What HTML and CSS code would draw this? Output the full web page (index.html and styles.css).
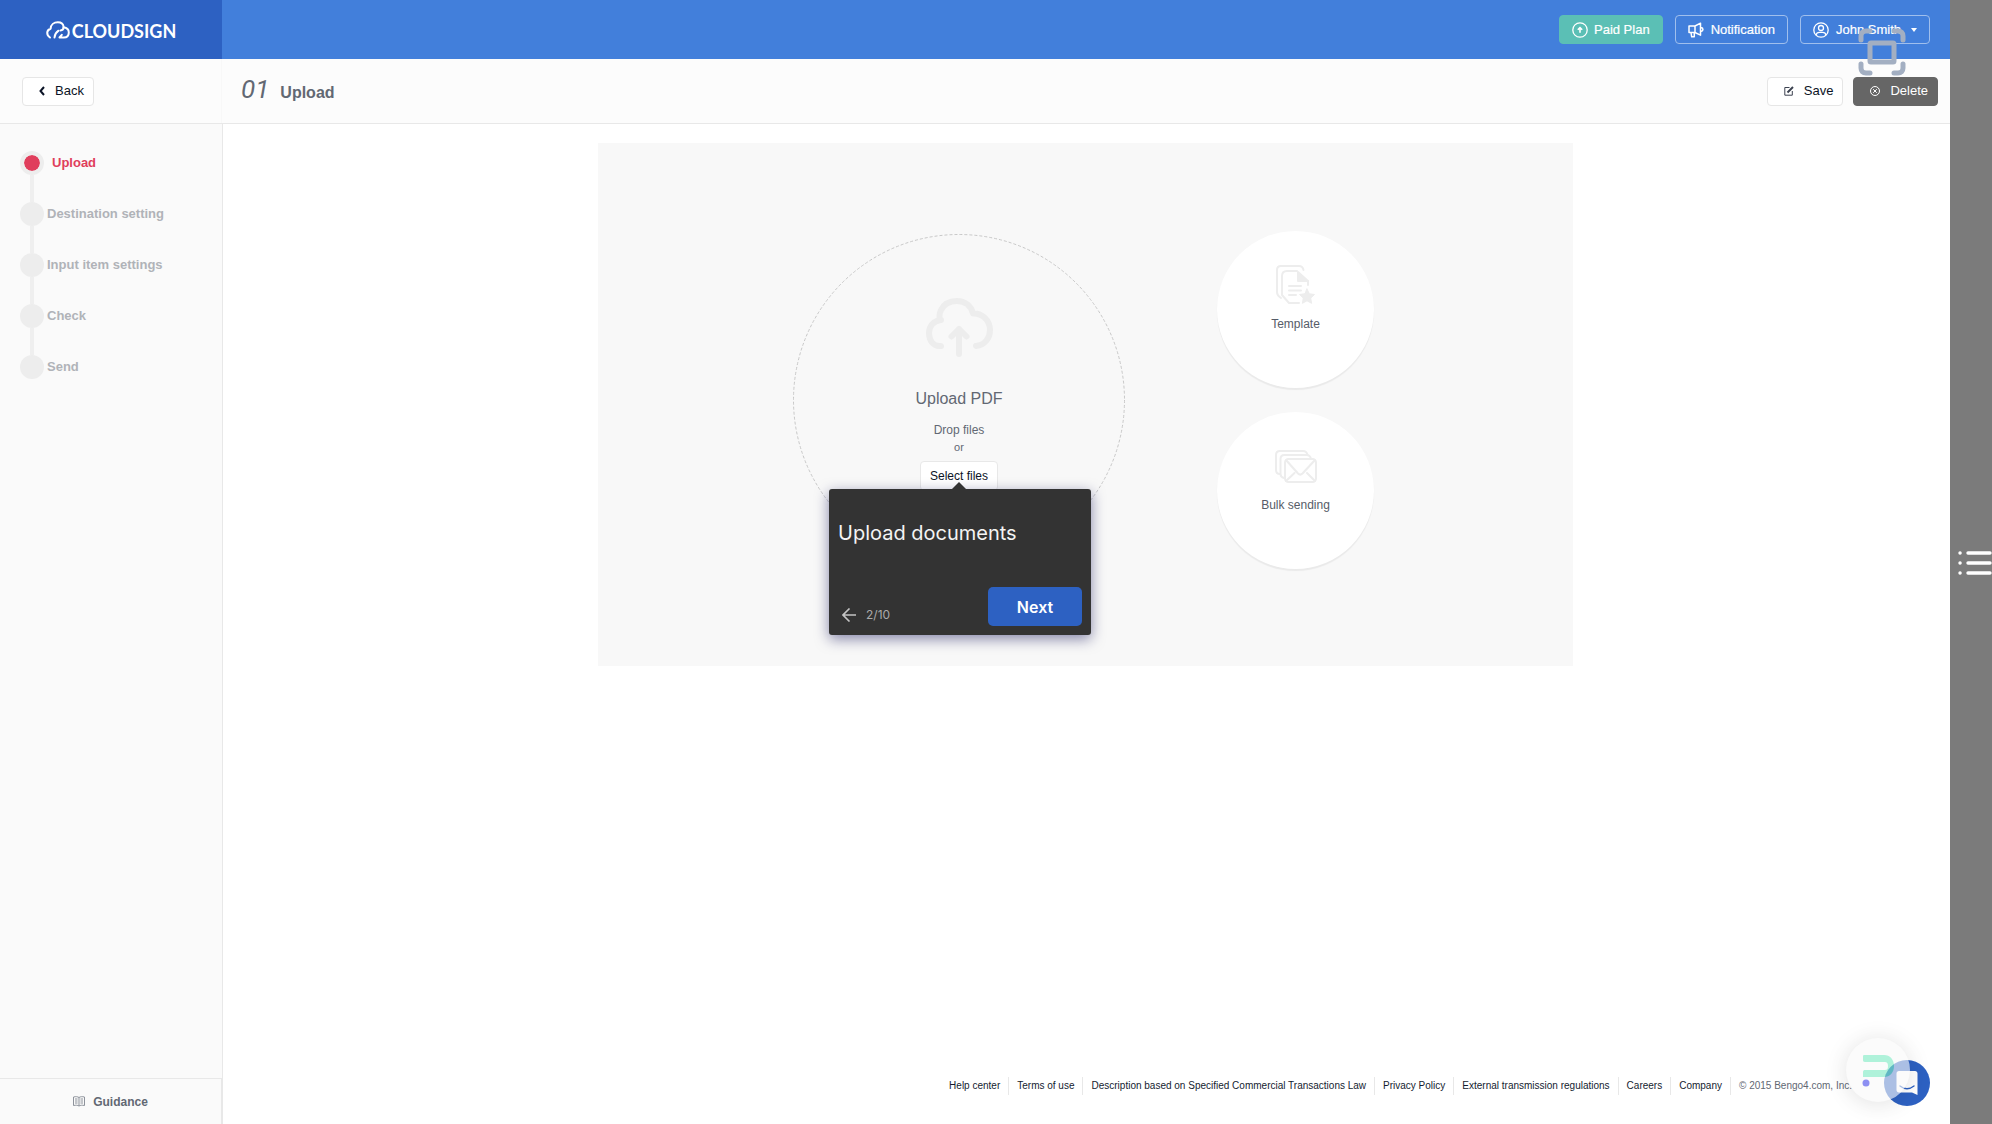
FILE: index.html
```html
<!DOCTYPE html>
<html lang="en">
<head>
<meta charset="utf-8">
<title>CloudSign - Upload</title>
<meta name="viewport" content="width=device-width, initial-scale=1">
<link rel="stylesheet" href="styles.css">
</head>
<body>
<div class="app">
  <header class="topbar">
    <a class="brand" href="#" aria-label="CloudSign">
      <svg class="brand-mark" viewBox="0 0 24 18" fill="none" stroke="#fff" stroke-width="2" stroke-linecap="round" stroke-linejoin="round"><path d="M4 16.500C.2 14 .2 9 4.600 7.700C4.800 3.700 8 1.300 11.800 1.300c3.300 0 5.600 2 5.800 4.700 0 2-1.100 3.400-3.100 3.400"/><path d="M17.600 6.300c3.300.5 5.200 2.500 5.200 5.200 0 3-2 5-5 5H13.500l2.300-2.700"/><path d="M8.500 16.500c.3-2.800 1.300-5 4-6.800"/></svg>
      <span class="brand-name">CLOUDSIGN</span>
    </a>
    <nav class="account">
      <button class="pill pill-plan" type="button">
        <svg width="16" height="16" viewBox="0 0 16 16" fill="none" stroke="#fff" stroke-width="1.300"><circle cx="8" cy="8" r="7.200"/><path d="M8 10.800V6M5.800 7.800L8 5.600l2.200 2.200" stroke-width="1.600"/></svg>
        Paid Plan
      </button>
      <button class="pill" type="button">
        <svg width="16" height="16" viewBox="0 0 16 16" fill="none" stroke="#fff" stroke-width="1.500" stroke-linejoin="round"><path d="M1 4h6l5.500-2.800v12L7 10.500H1zM7 4v6.500M3 10.500l.7 4.300h2.600v-4.300M13 5.600c2.600.3 2.600 3.600 0 3.900"/></svg>
        Notification
      </button>
      <button class="pill" type="button">
        <svg width="16" height="16" viewBox="0 0 16 16" fill="none" stroke="#fff" stroke-width="1.300"><circle cx="8" cy="8" r="7.200"/><circle cx="8" cy="6" r="2.500"/><path d="M3 13c.5-2 1.800-2.700 3.300-2.700h3.400c1.500 0 2.800.7 3.300 2.700"/></svg>
        John Smith
        <svg class="caret" width="6" height="4" viewBox="0 0 6 4"><path d="M0 0h6L3 4z" fill="#fff"/></svg>
      </button>
    </nav>
  </header>

  <div class="toolbar">
    <div class="toolbar-side">
      <button class="btn" type="button">
        <svg width="6" height="10" viewBox="0 0 6 10" fill="none" stroke="#0b1326" stroke-width="2"><path d="M5 1L1.500 5 5 9"/></svg>
        Back
      </button>
    </div>
    <div class="toolbar-main">
      <h1 class="title"><span class="title-no">01</span>Upload</h1>
      <button class="btn" type="button">
        <svg width="10" height="10" viewBox="0 0 10 10" fill="none" stroke="#3c4250"><path d="M5.500 1.500H.8v7.700h7.500V5"/><path d="M3.500 6.500L9 1" stroke-width="2"/></svg>
        Save
      </button>
      <button class="btn btn-dark" type="button">
        <svg width="10" height="10" viewBox="0 0 10 10" fill="none" stroke="#fff"><circle cx="5" cy="5" r="4.500"/><path d="M3.200 3.200l3.600 3.600M6.800 3.200L3.200 6.800"/></svg>
        Delete
      </button>
    </div>
  </div>

  <div class="body">
    <aside class="sidebar">
      <ol class="steps">
        <li class="step step-on">Upload</li>
        <li class="step">Destination setting</li>
        <li class="step">Input item settings</li>
        <li class="step">Check</li>
        <li class="step">Send</li>
      </ol>
      <a class="guidance" href="#">
        <svg width="12" height="11" viewBox="0 0 12 11" fill="none" stroke="#8d929b"><path d="M.5 1C3 .4 4.500.6 6 1.500 7.500.6 9 .4 11.500 1v8.500C9 9 7.500 9.200 6 10 4.500 9.200 3 9 .5 9.500zM6 1.500V10M2 3h2.500M2 5h2.500M2 7h2.500M7.500 3H10M7.500 5H10M7.500 7H10"/></svg>
        Guidance
      </a>
    </aside>

    <main class="content">
      <section class="panel">
        <div class="dropzone">
          <svg class="ring" viewBox="0 0 332 332" fill="none"><circle cx="166" cy="166" r="165.500" stroke="#c8c8c8" stroke-dasharray="3 2"/></svg>
          <svg width="68" height="60" viewBox="0 0 68 60" fill="none" stroke="#ededed" stroke-width="6" stroke-linecap="round" stroke-linejoin="round"><path d="M16 49C8 50 4 43 4 36c0-7 5-12.500 12-13C12.500 23 13.500 4 32 4c8 0 14 5 16 12.500C57 16 65 23 65 33c0 8-5 15-14 16"/><path d="M34 57V32M26.500 39.500L34 32l7.500 7.500"/></svg>
          <h2 class="drop-title">Upload PDF</h2>
          <p class="drop-text">Drop files</p>
          <p class="drop-or">or</p>
          <div class="select-wrap">
            <button class="select" type="button">Select files</button>
            <div class="tip" role="dialog" aria-label="Upload documents">
              <p class="tip-title">Upload documents</p>
              <div class="tip-foot">
                <button class="tip-back" type="button" aria-label="Previous">
                  <svg width="14" height="14" viewBox="0 0 14 14" fill="none" stroke="#c4c4c4" stroke-width="1.600"><path d="M14 7H1M7.500.5L1 7l6.500 6.500"/></svg>
                </button>
                <span class="tip-count">2/10</span>
                <button class="tip-next" type="button">Next</button>
              </div>
            </div>
          </div>
        </div>
        <div class="options">
          <button class="option" type="button">
            <svg width="40" height="40" viewBox="0 0 40 40" fill="none" stroke="#ededed" stroke-width="2" stroke-linejoin="round" stroke-linecap="round"><path d="M5 33c-3-2-4-3-4-6V5c0-2.500 1.500-4 4-4h18c2.500 0 4 1.500 4.500 4"/><path d="M21 6H11C8 6 6 8 6 11v19l7 8h10M32 16v4"/><path d="M22 7l10 9H22z" fill="#ededed"/><path d="M13 21h12M13 25.500h12M13 30h7"/><path d="M31 24l2.300 4.800 5.200.7-3.800 3.600.9 5.200-4.600-2.500-4.600 2.500.9-5.200-3.800-3.600 5.200-.7z" fill="#ededed" stroke-width="1"/></svg>
            Template
          </button>
          <button class="option" type="button">
            <svg width="42" height="40" viewBox="0 0 42 40" fill="none" stroke="#ededed" stroke-width="2" stroke-linejoin="round" stroke-linecap="round"><path d="M5 28C2.500 28 1 26.500 1 24V9c0-2.500 1.500-4 4-4h23c2.500 0 4 1.500 4.500 4"/><path d="M9 32c-2.500-.5-3.500-2-3.500-4V13c0-2.500 1.500-4 4-4h22c2.500 0 4 1.500 4.500 4"/><rect x="10" y="13" width="31" height="23" rx="3.500"/><path d="M11 14l12 13.500c1.500 1.500 3 1.500 4.500 0L40 14M11 35l8.500-8M40 35l-8-8"/></svg>
            Bulk sending
          </button>
        </div>
      </section>

      <footer class="footer">
        <a href="#">Help center</a>
        <a href="#">Terms of use</a>
        <a href="#">Description based on Specified Commercial Transactions Law</a>
        <a href="#">Privacy Policy</a>
        <a href="#">External transmission regulations</a>
        <a href="#">Careers</a>
        <a href="#">Company</a>
        <span>© 2015 Bengo4.com, Inc.</span>
      </footer>
    </main>
  </div>

  <svg class="capture" width="48" height="48" viewBox="0 0 48 48" fill="none" stroke="#a3afc2" stroke-width="5" stroke-linecap="round" stroke-linejoin="round"><path d="M3 12V8c0-3 2-5 5-5h4M36 3h4c3 0 5 2 5 5v4M45 36v4c0 3-2 5-5 5h-4M12 45H8c-3 0-5-2-5-5v-4"/><rect x="12" y="15" width="24" height="19" rx="1"/></svg>
  <button class="chat" type="button" aria-label="Open chat">
    <svg width="22" height="25" viewBox="0 0 22 25"><path d="M3 0h16c1.500 0 2.500 1 2.500 2.500V24L16 21.500H3C1.500 21.500.5 20.500.5 19V2.500C.5 1 1.500 0 3 0z" fill="#fff"/><path d="M4 15c4.500 3.500 9.500 3.500 14 0" fill="none" stroke="#2d61c2" stroke-width="1.400" stroke-linecap="round"/></svg>
  </button>
  <button class="helper" type="button" aria-label="Open guide">
    <svg width="34" height="34" viewBox="0 0 34 34"><path d="M3 2h20c6 0 10 4.500 10 11s-4 11-10 11H2v-5c0-1.500 1-2 2-2h20c2.500 0 3-1.500 3-4s-1-4-3-4H4C2.500 9 2 8 2 7V3.500C2 2.500 2.500 2 3 2z" fill="#7eeac3"/><circle cx="5" cy="30" r="3.500" fill="#474ceb"/></svg>
  </button>
</div>
<div class="rail">
  <button class="rail-btn" type="button" aria-label="Step list">
    <svg width="34" height="24" viewBox="0 0 34 24" stroke="#fff" stroke-width="3.400" stroke-linecap="round"><path d="M10 2h22M10 12h22M10 22h22M2 2h.1M2 12h.1M2 22h.1"/></svg>
  </button>
</div>
</body>
</html>
```
FILE: styles.css
```css
*, *::before, *::after { box-sizing: border-box; }

body {
  margin: 0;
  min-height: 100vh;
  display: flex;
  background: #fff;
  color: #626873;
  font: 13px/16px "Liberation Sans", Arial, sans-serif;
}

h1, h2, p, ol { margin: 0; padding: 0; font-weight: normal; }
button { font: inherit; cursor: pointer; }
a { color: inherit; text-decoration: none; }
svg { flex: none; display: block; }

.app {
  position: relative;
  flex: 1;
  display: flex;
  flex-direction: column;
}

/* Top bar */
.topbar {
  display: flex;
  height: 59px;
  background: #427fdb;
}
.brand {
  width: 222px;
  display: flex;
  align-items: center;
  justify-content: center;
  gap: 2px;
  background: #2d61c2;
  color: #fff;
}
.brand-mark { width: 24px; height: 18px; }
.brand-name { padding-top: 2px; font: bold 18px/20px Lato, sans-serif; }
.account {
  flex: 1;
  display: flex;
  align-items: center;
  justify-content: flex-end;
  gap: 12px;
  padding-right: 20px;
}
.pill {
  height: 29px;
  display: flex;
  align-items: center;
  gap: 7px;
  padding: 0 12px;
  border: 1px solid #a0bfed;
  border-radius: 4px;
  background: transparent;
  color: #fff;
  -webkit-text-stroke: 0.2px #fff;
}
.pill-plan { gap: 6px; border-color: #5bbfb5; background: #5bbfb5; }
.caret { margin-left: 3px; }

/* Page toolbar */
.toolbar {
  display: flex;
  height: 65px;
  border-bottom: 1px solid #e8e8e8;
  background: #fcfcfc;
}
.toolbar-side {
  width: 222px;
  display: flex;
  align-items: center;
  padding-left: 22px;
  border-right: 1px solid #f8f8f8;
}
.toolbar-main {
  flex: 1;
  display: flex;
  align-items: center;
  gap: 10px;
  padding: 0 12px 0 19px;
}
.title {
  flex: 1;
  display: flex;
  align-items: baseline;
  gap: 11px;
  font-size: 16px;
  line-height: 32px;
  font-weight: bold;
}
.title-no { font: italic 26px/32px Roboto, sans-serif; }
.btn {
  height: 29px;
  display: flex;
  align-items: center;
  gap: 10px;
  padding: 0 9px 0 16px;
  border: 1px solid #e6e6e6;
  border-radius: 4px;
  background: #fff;
  color: #0b1326;
}
.btn-dark { border-color: #666; background: #666; color: #fff; }

/* Steps */
.body { flex: 1; display: flex; }
.sidebar {
  width: 223px;
  display: flex;
  flex-direction: column;
  justify-content: space-between;
  border-right: 1px solid #e8e8e8;
  background: #fafafa;
}
.steps {
  display: flex;
  flex-direction: column;
  gap: 27px;
  padding: 27px 0 0 20px;
  list-style: none;
}
.step {
  position: relative;
  display: flex;
  gap: 3px;
  height: 24px;
  color: #b0b3b8;
  font-weight: bold;
  line-height: 23px;
}
.step::before {
  content: "";
  width: 24px;
  height: 24px;
  border-radius: 50%;
  background: #ededed;
}
.step:not(:last-child)::after {
  content: "";
  position: absolute;
  left: 10px;
  top: 24px;
  width: 4px;
  height: 27px;
  background: #efefef;
}
.step-on { gap: 8px; color: #e03e5c; }
.step-on::before { border: 4px solid #ededed; background: #e03e5c; background-clip: padding-box; }
.guidance {
  height: 46px;
  display: flex;
  align-items: center;
  justify-content: center;
  gap: 8px;
  border-top: 1px solid #e8e8e8;
  border-right: 1px solid #e8e8e8;
  font-size: 12px;
  font-weight: bold;
}

/* Upload panel */
.content {
  flex: 1;
  display: flex;
  flex-direction: column;
  justify-content: space-between;
  padding: 19px 20px 29px 18px;
}
.panel {
  width: 100%;
  max-width: 975px;
  align-self: center;
  display: flex;
  align-items: center;
  justify-content: center;
  gap: 92px;
  padding: 88px 4px 97px 0;
  background: #f8f8f8;
}
.dropzone {
  position: relative;
  width: 332px;
  height: 332px;
  display: flex;
  flex-direction: column;
  align-items: center;
  padding-top: 63px;
}
.ring { position: absolute; inset: 0; width: 100%; height: 100%; }
.drop-title { margin-top: 32px; font-size: 16px; line-height: 20px; }
.drop-text { margin-top: 13px; font-size: 12px; }
.drop-or { margin-top: 1px; font-size: 11px; }
.select-wrap { position: relative; margin-top: 6px; }
.select {
  height: 30px;
  padding: 0 9px;
  border: 1px solid #e8e8e8;
  border-radius: 4px;
  background: #fff;
  color: #0b1326;
  font-size: 12px;
}
.tip {
  position: absolute;
  z-index: 2;
  left: 50%;
  top: 28px;
  width: 262px;
  height: 146px;
  margin-left: -130px;
  display: flex;
  flex-direction: column;
  justify-content: space-between;
  padding: 32px 9px 9px;
  border-radius: 3px;
  background: #333;
  box-shadow: 0 4px 14px rgba(20, 20, 90, 0.5);
  color: #f4f4f4;
  font-family: Inter, sans-serif;
}
.tip::before {
  content: "";
  position: absolute;
  left: 50%;
  top: -7px;
  margin-left: -8px;
  border: 7px solid transparent;
  border-top: 0;
  border-bottom-color: #333;
}
.tip-title { font-size: 20px; line-height: 24px; }
.tip-foot { display: flex; align-items: flex-end; gap: 10px; }
.tip-back { padding: 0 0 4px 4px; border: 0; background: none; }
.tip-count { flex: 1; padding-bottom: 3px; color: #aaa; font-size: 12px; }
.tip-next {
  width: 94px;
  height: 39px;
  border: 0;
  border-radius: 5px;
  background: #2d61c2;
  color: #fff;
  font-size: 16px;
  font-weight: 600;
}
.options { display: flex; flex-direction: column; gap: 24px; }
.option {
  width: 157px;
  height: 157px;
  display: flex;
  flex-direction: column;
  align-items: center;
  gap: 11px;
  padding: 34px 0 0;
  border: 0;
  border-radius: 50%;
  background: #fff;
  box-shadow: 0 2px 1px rgba(0, 0, 0, 0.06);
  color: #565c68;
  font-size: 12px;
}

/* Footer */
.footer {
  display: flex;
  justify-content: flex-end;
  padding-right: 78px;
  font-size: 10px;
  line-height: 18px;
}
.footer > * { padding: 0 8px; }
.footer > a { border-right: 1px solid #e8e8e8; color: #141c30; }
.footer > span { padding-right: 0; }

/* Overlaid controls */
.capture { position: absolute; top: 28px; right: 44px; }
.chat, .helper {
  position: fixed;
  display: flex;
  align-items: center;
  justify-content: center;
  padding: 0;
  border: 0;
  border-radius: 50%;
}
.chat {
  right: 62px;
  bottom: 18px;
  width: 46px;
  height: 46px;
  background: #2d61c2;
}
.helper {
  right: 82px;
  bottom: 22px;
  width: 64px;
  height: 64px;
  background: #f8f8f8;
  box-shadow: 0 2px 24px rgba(0, 0, 0, 0.2);
  opacity: 0.62;
}

/* Side rail */
.rail {
  width: 42px;
  display: flex;
  align-items: center;
  justify-content: flex-end;
  background: #7b7b7b;
}
.rail-btn { padding: 1px 0 0; border: 0; background: none; }
```
